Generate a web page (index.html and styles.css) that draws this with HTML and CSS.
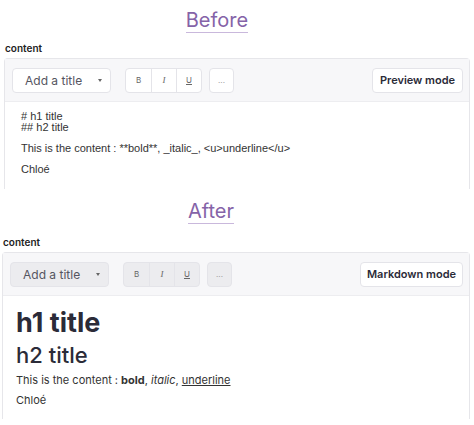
FILE: index.html
```html
<!DOCTYPE html>
<html lang="en">
<head>
    <meta charset="UTF-8">
    <title>Before / After</title>
    <link rel="stylesheet" href="styles.css">
</head>
<body>
    <section class="case case-before">
        <h2 class="case-title"><span>Before</span></h2>
        <div class="label">content</div>
        <div class="editor">
            <div class="toolbar">
                <div class="select">Add a title <span class="caret"></span></div>
                <div class="group">
                    <button class="tool tool-b">B</button>
                    <button class="tool tool-i">I</button>
                    <button class="tool tool-u">U</button>
                </div>
                <button class="tool tool-more">...</button>
                <button class="mode">Preview mode</button>
            </div>
            <div class="body raw">
                <p># h1 title<br>## h2 title</p>
                <p>This is the content : **bold**, _italic_, &lt;u&gt;underline&lt;/u&gt;</p>
                <p>Chloé</p>
            </div>
        </div>
    </section>

    <section class="case case-after">
        <h2 class="case-title"><span>After</span></h2>
        <div class="label">content</div>
        <div class="editor disabled">
            <div class="toolbar">
                <div class="select">Add a title <span class="caret"></span></div>
                <div class="group">
                    <button class="tool tool-b">B</button>
                    <button class="tool tool-i">I</button>
                    <button class="tool tool-u">U</button>
                </div>
                <button class="tool tool-more">...</button>
                <button class="mode">Markdown mode</button>
            </div>
            <div class="body preview">
                <h1>h1 title</h1>
                <h2>h2 title</h2>
                <p>This is the content : <b>bold</b>, <i>italic</i>, <u>underline</u></p>
                <p>Chloé</p>
            </div>
        </div>
    </section>
</body>
</html>
```

FILE: styles.css
```css
body {
    margin: 0;
    font-family: Inter, "Noto Sans", sans-serif;
    color: #2b2b38;
    background: #fff;
}
.case-title {
    margin: 0;
    text-align: center;
    font-weight: 400;
    font-size: 20px;
    line-height: 24px;
    color: #8563a8;
}
.case-title span {
    border-bottom: 1px solid #c9b8dc;
}
.case-before .case-title {
    padding: 8px 40px 0 0;
}
.case-after .case-title {
    padding: 10px 52px 0 0;
}
.label {
    font-size: 10px;
    font-weight: 600;
    color: #222;
    line-height: 12px;
}
.case-before .label {
    margin: 10px 0 4px 5px;
}
.case-after .label {
    margin: 13px 0 4px 3px;
}
.editor {
    border: 1px solid #e6e6ea;
    border-bottom: none;
    border-radius: 4px 4px 0 0;
}
.case-before .editor {
    margin: 0 4px 0 4px;
    height: 130px;
}
.case-after .editor {
    margin: 0 4px 0 2px;
    height: 166px;
}
.toolbar {
    display: flex;
    align-items: center;
    gap: 14px;
    height: 42px;
    padding: 0 6px 0 7px;
    background: #f7f7f9;
    border-bottom: 1px solid #ededf0;
}
button {
    font-family: inherit;
    padding: 0;
    cursor: pointer;
}
.tool {
    width: 25px;
    height: 23px;
    border: none;
    background: transparent;
    font-size: 8px;
    color: #666;
}
.select, .group, .tool-more, .mode {
    height: 25px;
    box-sizing: border-box;
    border: 1px solid #e4e4e9;
    border-radius: 4px;
    background: #fff;
}
.select {
    width: 99px;
    display: flex;
    align-items: center;
    justify-content: space-between;
    padding: 0 8px 0 12px;
    font-size: 12px;
    color: #55555f;
}
.caret {
    width: 0;
    height: 0;
    border-left: 2.5px solid transparent;
    border-right: 2.5px solid transparent;
    border-top: 3px solid #666;
}
.group {
    display: flex;
}
.group .tool + .tool {
    border-left: 1px solid #e4e4e9;
}
.tool-i {
    font-style: italic;
    font-family: "Liberation Serif", serif;
    font-size: 9px;
}
.tool-u {
    text-decoration: underline;
}
.tool-more {
    width: 25px;
    margin-left: -7px;
    font-size: 8px;
    line-height: 14px;
    color: #999;
}
.mode {
    margin-left: auto;
    padding: 0;
    white-space: nowrap;
    font-size: 11px;
    font-weight: 600;
    color: #2b2b38;
}
.case-before .mode {
    width: 91px;
}
.case-after .mode {
    width: 103px;
}
.disabled .select,
.disabled .group,
.disabled .tool-more {
    background: #ececef;
}
.raw {
    font-family: "Liberation Sans", Arial, sans-serif;
    font-size: 11px;
    line-height: 11px;
    color: #333;
    padding: 9px 16px 0 16px;
}
.raw p {
    margin: 0 0 10px 0;
}
.preview {
    padding: 9px 13px 0 13px;
    color: #2b2b38;
}
.preview h1 {
    margin: 0;
    font-size: 27px;
    line-height: 35px;
    font-weight: 700;
}
.preview h2 {
    margin: 0;
    font-size: 22px;
    line-height: 30px;
    font-weight: 500;
}
.preview p {
    margin: 0;
    font-size: 11px;
    line-height: 20px;
    color: #333;
}
```
